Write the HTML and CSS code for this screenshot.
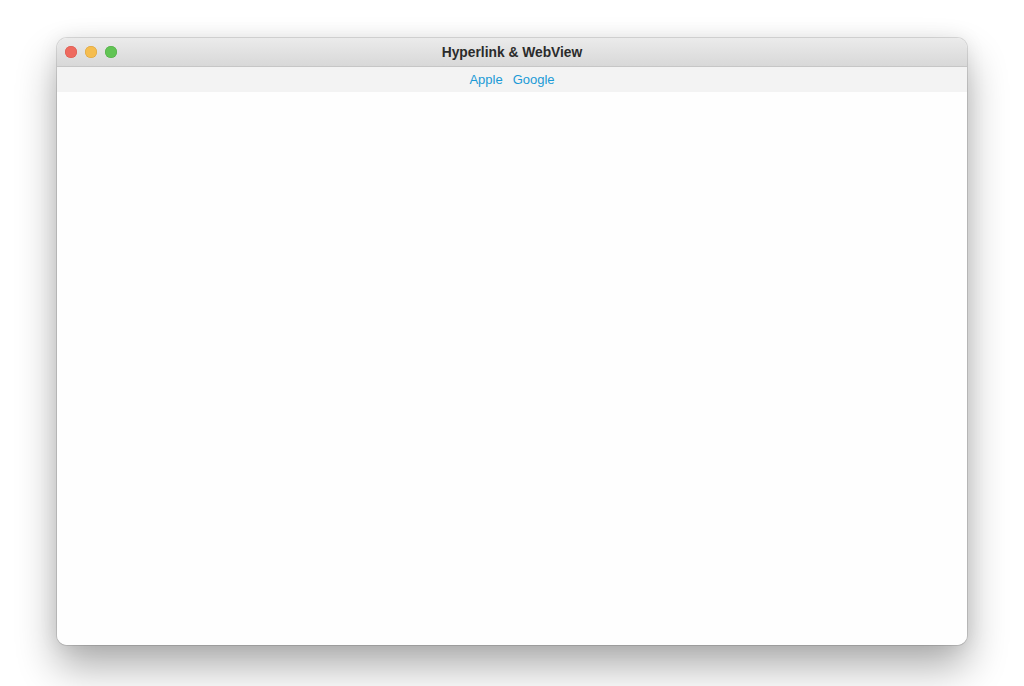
FILE: index.html
```html
<!DOCTYPE html>
<html>
<head>
<meta charset="utf-8">
<link rel="stylesheet" href="styles.css">
</head>
<body>
<div class="stage">
  <div class="window">
    <div class="titlebar">
      <div class="lights">
        <span class="light red"></span>
        <span class="light yellow"></span>
        <span class="light green"></span>
      </div>
      <div class="title">Hyperlink &amp; WebView</div>
    </div>
    <div class="toolbar">
      <a class="link" href="#">Apple</a>
      <a class="link" href="#">Google</a>
    </div>
    <div class="content"></div>
  </div>
</div>
</body>
</html>
```
FILE: styles.css
```css
html, body {
  margin: 0;
  padding: 0;
  background: #ffffff;
  width: 1024px;
  height: 686px;
  overflow: hidden;
}
.stage {
  padding: 38px 0 0 57px;
}
.window {
  width: 910px;
  height: 607px;
  border-radius: 10px;
  overflow: hidden;
  display: flex;
  flex-direction: column;
  background: #fefefe;
  box-shadow: 0 0 0 1px rgba(0,0,0,0.12), 0 22px 40px rgba(0,0,0,0.32), 0 0 20px rgba(0,0,0,0.08);
  font-family: "Liberation Sans", Arial, sans-serif;
}
.titlebar {
  height: 28px;
  flex: none;
  position: relative;
  display: flex;
  align-items: center;
  justify-content: center;
  background: linear-gradient(#ebebeb, #d8d8d8);
  border-bottom: 1px solid #c6c6c6;
}
.lights {
  position: absolute;
  left: 8px;
  top: 8px;
  display: flex;
  gap: 8px;
}
.light {
  width: 12px;
  height: 12px;
  border-radius: 50%;
  display: block;
}
.red { background: #ee6a5f; box-shadow: inset 0 0 0 0.5px #d8574c; }
.yellow { background: #f5bd4f; box-shadow: inset 0 0 0 0.5px #d9a13a; }
.green { background: #61c454; box-shadow: inset 0 0 0 0.5px #4fa944; }
.title {
  font-size: 13.8px;
  font-weight: bold;
  color: #2b2b2b;
  padding-top: 1px;
}
.toolbar {
  height: 25px;
  flex: none;
  background: #f3f3f3;
  display: flex;
  align-items: center;
  justify-content: center;
  gap: 10px;
}
.link {
  font-size: 13px;
  color: #1b9ad6;
  text-decoration: none;
}
.content {
  flex: 1;
  background: #fefefe;
}
```
